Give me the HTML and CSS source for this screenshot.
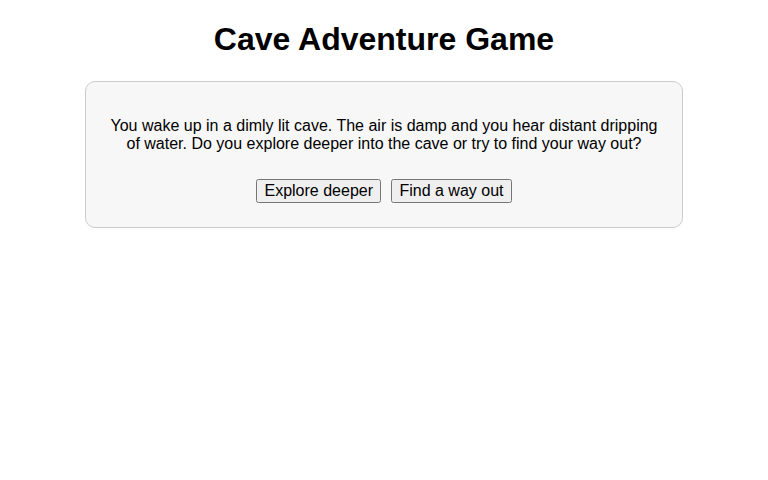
FILE: index.html
```html
<!DOCTYPE html>
<html lang="en">
<head>
  <meta charset="UTF-8" />
  <meta name="viewport" content="width=device-width, initial-scale=1" />
  <title>Cave Adventure Game</title>
  <link rel="stylesheet" href="styles.css">
</head>
<body>

  <h1>Cave Adventure Game</h1>

  <div id="game">
    <p id="story">You wake up in a dimly lit cave. The air is damp and you hear distant dripping of water. Do you explore deeper into the cave or try to find your way out?</p>
    <div id="choices">
      <button class="choice">Explore deeper</button>
      <button class="choice">Find a way out</button>
    </div>
  </div>

</body>
</html>
```

FILE: styles.css
```css
body { font-family: "Liberation Sans", Arial, sans-serif; text-align: center; margin: 0; padding: 1px 8px; }
h1 { font-size: 32px; margin: 20px 0 23px; }
#game {
  max-width: 556px; margin: 0 auto; padding: 19px 20px 20px;
  border: 1px solid #ccc; border-radius: 10px; background-color: #f7f7f7;
}
#choices { margin: 26px 0 4px; }
.choice { font: inherit; margin: 0 3px; }
```
